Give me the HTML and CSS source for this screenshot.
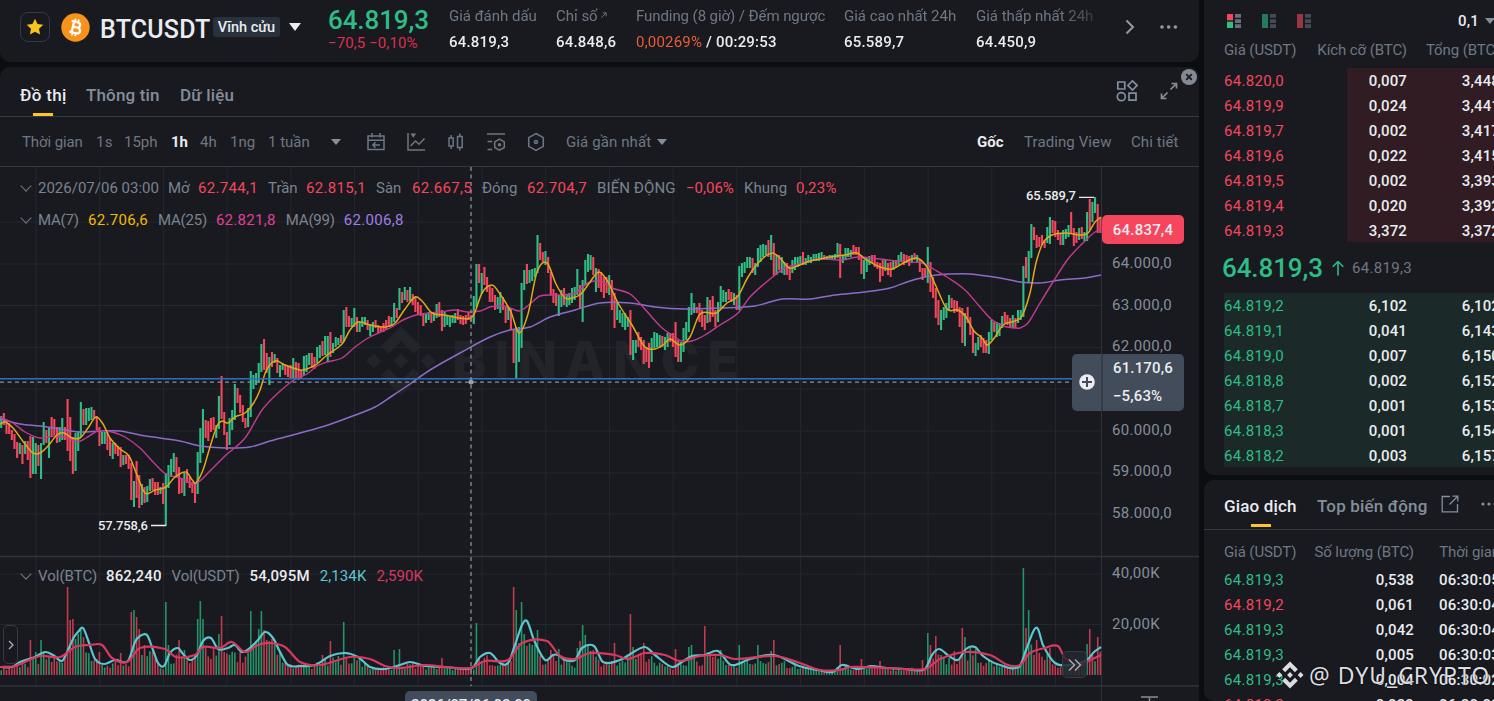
FILE: index.html
```html
<!DOCTYPE html>
<html lang="vi">
<head>
    <meta charset="UTF-8">
    <meta name="viewport" content="width=device-width, initial-scale=1.0">
    <title>BTCUSDT Vĩnh cửu</title>
    <link rel="stylesheet" href="styles.css">
</head>
<body>
    <div class="layout">
        <div class="main-col">
            <!-- Symbol header -->
            <header class="panel ticker">
                <div class="fav">
                    <svg width="18" height="18" viewBox="0 0 18 18"><path d="M9 .8l2.5 5.3 5.8.7-4.3 4 1.1 5.8L9 13.8l-5.100 2.800 1.100-5.800-4.300-4 5.800-.7z" fill="#f8c51c"/></svg>
                </div>
                <svg class="coin" width="29" height="29" viewBox="0 0 29 29">
                    <circle cx="14.500" cy="14.500" r="14.200" fill="#f7931a"/>
                    <g transform="rotate(13 14.500 14.500)" fill="none" stroke="#fff" stroke-width="2.300">
                        <path d="M9.300 9h6.200c4 0 4 5.200 0 5.200h-3.800M9.300 20h7c4.400 0 4.400-5.800 0-5.800M11.800 9v11"/>
                        <path d="M12.700 6v3M16 6v3M12.700 20v3M16 20v3" stroke-width="1.700"/>
                    </g>
                </svg>
                <h1>BTCUSDT</h1>
                <span class="tag">Vĩnh cửu</span>
                <span class="caret caret-white"></span>
                <div class="last">
                    <strong>64.819,3</strong>
                    <span>−70,5 −0,10%</span>
                </div>
                <div class="stats">
                    <div class="stat mark"><label>Giá đánh dấu</label><b>64.819,3</b></div>
                    <div class="stat index"><label>Chỉ số <svg width="6" height="6" viewBox="0 0 7 7"><path d="M.5 6.500L6 1M2 1h4v4" fill="none" stroke="#6f7783" stroke-width="1.100"/></svg></label><b>64.848,6</b></div>
                    <div class="stat funding"><label>Funding (8 giờ) / Đếm ngược</label><b><i>0,00269%</i> / 00:29:53</b></div>
                    <div class="stat high"><label>Giá cao nhất 24h</label><b>65.589,7</b></div>
                    <div class="stat low"><label>Giá thấp nhất 24h</label><b>64.450,9</b></div>
                </div>
                <svg class="next" width="10" height="16" viewBox="0 0 10 16"><path d="M1.500 1.500L8 8l-6.500 6.500" fill="none" stroke="#929aa5" stroke-width="2"/></svg>
                <svg class="more" width="18" height="4" viewBox="0 0 18 4"><g fill="#929aa5"><circle cx="2" cy="2" r="1.800"/><circle cx="8.700" cy="2" r="1.800"/><circle cx="15.400" cy="2" r="1.800"/></g></svg>
            </header>

            <!-- Chart -->
            <section class="panel chart-panel">
                <nav class="tabs">
                    <a class="active tab-chart">Đồ thị</a>
                    <a class="tab-info">Thông tin</a>
                    <a>Dữ liệu</a>
                    <svg class="widgets" width="22" height="22" viewBox="0 0 22 22"><g fill="none" stroke="#848e9c" stroke-width="1.700"><path d="M1.800 2h7v7h-7zM13 13.200h7v7h-7zM16.500.8l4.600 4.600-4.600 4.600-4.600-4.600z"/><circle cx="5.300" cy="16.700" r="4"/></g></svg>
                    <svg class="expand" width="18" height="18" viewBox="0 0 18 18"><path d="M10.500 7.500L16.500 1.500M11.500 1.500h5v5M7.500 10.500l-6 6M1.500 11.500v5h5" fill="none" stroke="#848e9c" stroke-width="1.700"/></svg>
                </nav>
                <svg class="close" width="16" height="16" viewBox="0 0 16 16"><circle cx="8" cy="8" r="8" fill="#848a94"/><path d="M5.200 5.200l5.600 5.600M10.800 5.200l-5.600 5.600" stroke="#181a20" stroke-width="1.800"/></svg>

                <div class="toolbar">
                    <span class="t-time">Thời gian</span>
                    <span class="t-1s">1s</span>
                    <span class="t-15">15ph</span>
                    <span class="t-1h active">1h</span>
                    <span class="t-4h">4h</span>
                    <span class="t-day">1ng</span>
                    <span class="t-week">1 tuần</span>
                    <span class="caret"></span>
                    <svg class="first-icon" width="20" height="20" viewBox="0 0 20 20"><path d="M2 4h16v13.500H2zM2 8.200h16M6 1v4.500M14 1v4.500M14 13H7M9.500 10.300L6.800 13l2.700 2.700"/></svg>
                    <svg width="20" height="20" viewBox="0 0 20 20"><path d="M2 1v17h17M4.500 14l5-5 3.500 3.200L18.500 6.500M5.800 2.200h3L7.300 4.500z"/></svg>
                    <svg width="20" height="20" viewBox="0 0 20 20"><path d="M3 6h4.200v8H3zM5.100 3v3M5.100 14v3M11.500 4.500h4.700v11h-4.700zM13.800 1.500v3M13.800 15.500v3"/></svg>
                    <svg width="20" height="20" viewBox="0 0 20 20"><path d="M1 2h18M1.500 9.500h4.700M1.500 17.500h4.700M13.500 7.200l4.800 2.700v5.600l-4.800 2.700-4.800-2.700V9.900z"/><circle cx="13.500" cy="12.700" r="1"/></svg>
                    <svg width="20" height="20" viewBox="0 0 20 20"><path d="M10 1.500l7.300 4.200v8.600L10 18.500l-7.300-4.200V5.700z"/><circle cx="10" cy="10" r="1.500"/></svg>
                    <span class="t-price">Giá gần nhất</span>
                    <span class="caret"></span>
                    <div class="views">
                        <span class="active">Gốc</span>
                        <span class="v-tv">Trading View</span>
                        <span class="v-detail">Chi tiết</span>
                    </div>
                </div>

                <div class="plot">
                    <svg id="chart" width="1199" height="534" viewBox="0 167 1199 534"></svg>

                    <div class="legend legend-ohlc">
                        <i class="chev"></i>
                        <span class="l-date">2026/07/06 03:00</span>
                        <span class="l-open">Mở</span><em>62.744,1</em>
                        <span class="l-high">Trần</span><em>62.815,1</em>
                        <span class="l-low">Sàn</span><em>62.667,5</em>
                        <span class="l-close">Đóng</span><em>62.704,7</em>
                        <span class="l-change">BIẾN ĐỘNG</span><em>−0,06%</em>
                        <span class="l-range">Khung</span><em>0,23%</em>
                    </div>
                    <div class="legend legend-ma">
                        <i class="chev"></i>
                        <span class="l-ma7">MA(7)</span><em class="yellow">62.706,6</em>
                        <span class="l-ma">MA(25)</span><em class="pink">62.821,8</em>
                        <span class="l-ma">MA(99)</span><em class="purple">62.006,8</em>
                    </div>
                    <div class="legend legend-vol">
                        <i class="chev"></i>
                        <span class="l-vol">Vol(BTC)</span><em class="white">862,240</em>
                        <span class="l-volu">Vol(USDT)</span><em class="white">54,095M</em>
                        <em class="cyan">2,134K</em>
                        <em class="magenta">2,590K</em>
                    </div>

                    <div class="price-tag">64.837,4</div>
                    <div class="cross-tag">
                        <div class="plus"><svg width="16" height="16" viewBox="0 0 16 16"><circle cx="8" cy="8" r="7.800" fill="#eaecef"/><path d="M8 3v10M3 8h10" stroke="#434c5a" stroke-width="2"/></svg></div>
                        <div class="cross-val"><span>61.170,6</span><span>−5,63%</span></div>
                    </div>
                    <div class="date-tag">2026/07/06 03:00</div>
                    <div class="drawer"><svg width="6" height="10" viewBox="0 0 6 10"><path d="M1 1l4 4-4 4" fill="none" stroke="#aab0b8" stroke-width="1.300"/></svg></div>
                    <div class="jump"><svg width="14" height="12" viewBox="0 0 14 12"><path d="M1 .5L6.500 6 1 11.500M7 .5L12.500 6 7 11.500" fill="none" stroke="#aab0b8" stroke-width="1.300"/></svg></div>
                </div>
            </section>
        </div>

        <div class="side-col">
            <!-- Order book -->
            <section class="panel book">
                <div class="book-top">
                    <svg width="14" height="14" viewBox="0 0 14 14"><path d="M0 0h6v6.300H0z" fill="#f6465d"/><path d="M0 7.700h6V14H0z" fill="#2ebd85"/><path d="M8 0h6v3.700H8zM8 5.200h6v3.700H8zM8 10.300h6V14H8z" fill="#68707c"/></svg>
                    <svg width="14" height="14" viewBox="0 0 14 14"><path d="M0 0h6v14H0z" fill="#247a5b"/><path d="M8 0h6v3.700H8zM8 5.200h6v3.700H8zM8 10.300h6V14H8z" fill="#454b55"/></svg>
                    <svg width="14" height="14" viewBox="0 0 14 14"><path d="M0 0h6v14H0z" fill="#9b3445"/><path d="M8 0h6v3.700H8zM8 5.200h6v3.700H8zM8 10.300h6V14H8z" fill="#454b55"/></svg>
                    <b>0,1</b><span class="caret"></span>
                </div>
                <div class="row head"><span>Giá (USDT)</span><span>Kích cỡ (BTC)</span><span>Tổng (BTC)</span></div>
                <div class="rows asks" id="asks"></div>
                <div class="mid"><strong>64.819,3</strong><svg width="12" height="16" viewBox="0 0 12 16"><path d="M6 15.500V1.500M.7 6.700L6 1.500l5.300 5.200" fill="none" stroke="#2ebd85" stroke-width="1.600"/></svg><span>64.819,3</span></div>
                <div class="rows bids" id="bids"></div>
            </section>

            <!-- Trades -->
            <section class="panel trades">
                <nav class="tabs">
                    <a class="active tab-trades">Giao dịch</a>
                    <a class="tab-top">Top biến động</a>
                    <svg class="popout" width="18" height="18" viewBox="0 0 18 18"><path d="M9 1.500H1.200v15.300h15.300V9M8.500 9.500l8-8M11.500 1.200h5.300v5.300" fill="none" stroke="#848e9c" stroke-width="1.300"/></svg>
                    <svg class="dots" width="18" height="4" viewBox="0 0 18 4"><g fill="#848e9c"><circle cx="2" cy="2" r="1.600"/><circle cx="8" cy="2" r="1.600"/><circle cx="14" cy="2" r="1.600"/></g></svg>
                </nav>
                <div class="row head"><span>Giá (USDT)</span><span>Số lượng (BTC)</span><span>Thời gian</span></div>
                <div id="trades"></div>
            </section>
        </div>
    </div>

    <div class="signature">
        <svg width="28" height="28" viewBox="0 0 28 28"><path d="M14 .5l7.800 7.800-2.900 2.900L14 6.300l-4.900 4.900-2.900-2.900zM3.400 11.100L6.300 14l-2.900 2.900L.5 14zM24.600 11.100l2.900 2.900-2.900 2.900-2.900-2.900zM14 11.100l2.900 2.900-2.900 2.900-2.900-2.900zM14 27.500l-7.800-7.800 2.900-2.900 4.900 4.900 4.900-4.900 2.900 2.900z" fill="#dcdde0"/></svg>
        <span>@ DYU_CRYPTO</span>
    </div>

    <script src="chart.js"></script>
</body>
</html>
```
FILE: styles.css
```css
* {
    box-sizing: border-box;
}

body {
    margin: 0;
    height: 701px;
    overflow: hidden;
    position: relative;
    background: #0b0e11;
    color: #eaecef;
    font-family: Roboto, "Noto Sans", sans-serif;
    font-size: 15px;
    letter-spacing: 0.3px;
}

.layout {
    display: flex;
    gap: 5px;
    width: 1525px;
    height: 701px;
    overflow: hidden;
}

.main-col {
    width: 1199px;
    display: flex;
    flex-direction: column;
    gap: 5px;
}

.side-col {
    width: 321px;
    display: flex;
    flex-direction: column;
    gap: 5px;
}

.panel {
    background: #181a20;
    border-radius: 10px;
}

.caret {
    border: 5px solid transparent;
    border-top: 6px solid #848e9c;
    border-bottom: 0;
}

.caret-white {
    border-width: 6px;
    border-top: 8px solid #eaecef;
    border-bottom: 0;
}

/* header */
.ticker {
    height: 62px;
    display: flex;
    align-items: center;
    padding: 0 21px 8px 20px;
    border-top-left-radius: 0;
    border-top-right-radius: 0;
    white-space: nowrap;
}

.fav {
    width: 30px;
    height: 30px;
    border: 1px solid #333b47;
    border-radius: 8px;
    display: flex;
    align-items: center;
    justify-content: center;
}

.coin {
    margin-left: 11px;
}

h1 {
    width: 110px;
    margin: 4px 0 0 10px;
    font-size: 25px;
    font-weight: 500;
    letter-spacing: 0.2px;
}

.tag {
    width: 67px;
    height: 20px;
    margin-left: 3px;
    background: #29313d;
    border-radius: 3px;
    font-weight: 500;
    font-size: 14.5px;
    line-height: 21px;
    letter-spacing: 0;
    text-align: center;
}

.ticker .caret {
    margin-left: 9px;
}

.last {
    width: 100px;
    margin: 6px 0 0 27px;
    display: flex;
    flex-direction: column;
    color: #d9304e;
}

.last strong,
.mid strong {
    color: #2ebd85;
    font-size: 26px;
    font-weight: 500;
    line-height: 26px;
    letter-spacing: -0.1px;
}

.last span {
    line-height: 21px;
    letter-spacing: 0.1px;
}

.stats {
    width: 645px;
    margin-left: 21px;
    display: flex;
    overflow: hidden;
    -webkit-mask-image: linear-gradient(to right, #000 610px, transparent 665px);
    mask-image: linear-gradient(to right, #000 610px, transparent 665px);
}

.stat {
    flex: none;
    display: flex;
    flex-direction: column;
    gap: 6px;
    margin-top: 4px;
}

.stat label {
    color: #6f7783;
    line-height: 20px;
    letter-spacing: -0.02px;
}

.stat svg {
    vertical-align: 3px;
}

.stat b {
    font-weight: 500;
    line-height: 20px;
    letter-spacing: 0.2px;
}

.stat i {
    font-style: normal;
    font-weight: 400;
    color: #ec5b36;
}

.mark { width: 107px; }
.index { width: 80px; }
.funding { width: 208px; }
.high { width: 132px; }

.funding label {
    letter-spacing: -0.08px;
}

.next {
    margin-left: 31px;
}

.more {
    margin-left: auto;
}

/* chart panel */
.chart-panel {
    position: relative;
    flex: 1;
    border-bottom-left-radius: 0;
    border-bottom-right-radius: 0;
}

.tabs {
    height: 50px;
    display: flex;
    align-items: center;
    padding: 7px 20px 0;
    border-bottom: 1px solid #333b47;
    font-size: 17px;
    font-weight: 500;
    color: #848e9c;
}

.tabs a {
    height: 42px;
    line-height: 42px;
    letter-spacing: 0.15px;
    white-space: nowrap;
}

.tabs .active {
    position: relative;
    color: #eaecef;
}

.tabs .active::after {
    content: "";
    position: absolute;
    left: 50%;
    bottom: 0;
    width: 20px;
    height: 3px;
    margin-left: -10px;
    background: #fcc529;
}

.tab-chart { width: 46px; }
.tabs .tab-chart { letter-spacing: 0.35px; }
.chart-panel .tab-info { width: 94px; }
.chart-panel .tab-chart { margin-right: 20px; }

.widgets {
    margin: 0 22px 8px auto;
}

.expand {
    margin: 0 1px 8px 0;
}

.close {
    position: absolute;
    right: 2px;
    top: 2px;
}

.toolbar {
    height: 50px;
    display: flex;
    align-items: center;
    padding: 0 20px 0 22px;
    border-bottom: 1px solid #333b47;
    color: #6f7783;
    white-space: nowrap;
}

.toolbar .active {
    color: #eaecef;
    font-weight: 700;
}

.toolbar svg {
    margin-right: 20px;
    fill: none;
    stroke: #6f7783;
    stroke-width: 1.5;
}

.t-time { width: 74px; letter-spacing: -0.1px; }
.t-1s { width: 28px; }
.t-15 { width: 47px; letter-spacing: 0; }
.t-1h { width: 29px; letter-spacing: -0.2px; }
.t-4h { width: 30px; letter-spacing: 0; }
.t-day { width: 38px; letter-spacing: 0; }
.t-week { width: 63px; letter-spacing: 0; }
.toolbar .first-icon { margin-left: 25px; }
.t-price { width: 91px; letter-spacing: 0.1px; }

.views {
    margin-left: auto;
    display: flex;
}

.views span { width: 47px; letter-spacing: 0; }
.views .v-tv { width: 107px; letter-spacing: 0.1px; }
.views .v-detail { width: 48px; letter-spacing: 0.1px; }

.plot {
    position: relative;
    height: 534px;
}

.plot svg {
    display: block;
}

#chart text {
    font-size: 15px;
    letter-spacing: 0.3px;
}

#chart .axis {
    fill: #848e9c;
}

#chart .extreme {
    fill: #eaecef;
    font-size: 13px;
    font-weight: 500;
    letter-spacing: 0;
}

#chart .brand {
    fill: #222429;
    font-family: Inter, sans-serif;
    font-size: 52px;
    font-weight: 800;
    letter-spacing: 1px;
}

/* legends lie over the chart */
.legend {
    position: absolute;
    left: 20px;
    display: flex;
    align-items: center;
    height: 20px;
    color: #7b8390;
    white-space: nowrap;
}

.legend-ohlc { top: 11px; }
.legend-ma { top: 43px; }
.legend-vol { top: 399px; }

.legend em {
    font-style: normal;
    color: #f6465d;
    margin-right: 10px;
}

.chev {
    width: 8px;
    height: 8px;
    margin: -5px 8px 0 2px;
    border: solid #6f7783;
    border-width: 0 1.5px 1.5px 0;
    transform: rotate(45deg);
}

.legend-ohlc em { width: 60px; }
.l-date { width: 130px; letter-spacing: 0; }
.l-open { width: 30px; letter-spacing: 0; }
.l-high { width: 38px; letter-spacing: 0; }
.l-low { width: 36px; letter-spacing: 0; }
.l-close { width: 45px; letter-spacing: 0; }
.l-change { width: 89px; letter-spacing: 0.1px; }
.legend-ohlc .l-change + em { width: 48px; letter-spacing: 0; }
.l-range { width: 52px; letter-spacing: 0.1px; }
.l-ma7 { width: 50px; letter-spacing: -0.2px; }
.l-ma { width: 58px; letter-spacing: -0.2px; }
.l-vol { width: 68px; letter-spacing: 0; }
.l-volu { width: 78px; letter-spacing: -0.1px; }

.legend .yellow { color: #f0b90b; }
.legend .pink { color: #e0409a; }
.legend .purple { color: #a27de5; }
.legend .cyan { color: #5cc6d0; letter-spacing: 0.1px; }
.legend .magenta { color: #d9385f; letter-spacing: 0.1px; }
.legend .white { color: #eaecef; font-weight: 500; letter-spacing: 0.15px; }

.price-tag {
    position: absolute;
    left: 1102px;
    top: 48px;
    width: 82px;
    height: 29px;
    background: #f6465d;
    border-radius: 5px;
    font-weight: 500;
    line-height: 30px;
    text-align: center;
    letter-spacing: 0.2px;
}

.cross-tag {
    position: absolute;
    left: 1072px;
    top: 187px;
    width: 112px;
    height: 57px;
    display: flex;
    background: #434c5a;
    border-radius: 5px;
    font-weight: 500;
}

.plus {
    width: 31px;
    padding: 0 0 2px 7px;
    display: flex;
    align-items: center;
    border-right: 2px solid #343c48;
}

.cross-val {
    display: flex;
    flex-direction: column;
    padding-left: 10px;
    line-height: 28px;
    letter-spacing: 0.15px;
}

.date-tag {
    position: absolute;
    left: 405px;
    top: 524px;
    width: 132px;
    height: 10px;
    overflow: hidden;
    padding-top: 5px;
    background: #434c5a;
    border-radius: 5px 5px 0 0;
    font-weight: 500;
    text-align: center;
    letter-spacing: -0.1px;
}

.drawer,
.jump {
    position: absolute;
    display: flex;
    align-items: center;
    justify-content: center;
    border: 1px solid #333b47;
    border-radius: 5px;
    background: #181a20;
}

.drawer {
    left: 3px;
    top: 458px;
    width: 15px;
    height: 39px;
}

.jump {
    left: 1062px;
    top: 484px;
    width: 25px;
    height: 27px;
    background: rgba(36, 40, 48, 0.85);
}

/* order book */
.book {
    height: 475px;
    border-top-left-radius: 0;
}

.book-top {
    height: 38px;
    display: flex;
    align-items: center;
    gap: 21px;
    padding: 4px 0 0 23px;
}

.book-top b {
    margin-left: 126px;
    font-weight: 500;
    letter-spacing: 0.2px;
}

.book-top .caret {
    margin-left: -15px;
}

.row {
    height: 25px;
    display: grid;
    grid-template-columns: 63px 120px 93px;
    padding-left: 20px;
    line-height: 25px;
    text-align: right;
    white-space: nowrap;
}

.row span {
    font-weight: 500;
    letter-spacing: 0.15px;
}

.row span:first-child {
    font-weight: 400;
    letter-spacing: 0.3px;
    text-align: left;
}

.head {
    color: #6f7783;
}

.row.head span {
    font-weight: 400;
    letter-spacing: -0.1px;
}

.book .head {
    margin-bottom: 5px;
}

.sell span:first-child { color: #f6465d; }
.buy span:first-child { color: #2ebd85; }

.asks,
.bids {
    height: 174px;
    padding-top: 1px;
    overflow: hidden;
}

.asks {
    background: linear-gradient(#311c24, #311c24) 143px 0 no-repeat;
}

.bids {
    background: linear-gradient(#1b2a29, #1b2a29) 20px 0 no-repeat;
}

.mid {
    height: 51px;
    display: flex;
    align-items: center;
    color: #6f7783;
    padding-left: 18px;
}

.mid strong {
    width: 110px;
}

.mid span {
    margin-left: 8px;
}

/* trades */
.trades {
    flex: 1;
    overflow: hidden;
}

.trades .tabs {
    padding: 3px 0 0 20px;
}

.trades .tabs .active::after {
    bottom: 0;
}

.tab-trades { width: 73px; margin-right: 20px; }
.tab-top { width: 124px; }

.popout {
    margin-top: -4px;
}

.trades .dots {
    margin: -4px 0 0 22px;
}

.trades .head {
    margin: 10px 0 3px;
}

.trades .row {
    grid-template-columns: 63px 127px 86px;
}

#trades .row span:last-child {
    letter-spacing: 0.25px;
}

/* author mark over the page */
.signature {
    position: absolute;
    left: 1276px;
    top: 656px;
    display: flex;
    align-items: center;
    gap: 5px;
    height: 38px;
    color: #dcdde0;
    font-family: "Noto Sans", sans-serif;
    font-size: 23px;
    letter-spacing: 1px;
    white-space: nowrap;
    text-shadow: 0 0 2px #000;
}
```
FILE: chart.js
```javascript
const UP = '#2ebd85';
const DOWN = '#f6465d';
const STEP = 2.655;
const FIRST_X = 1.2;
const VOL_BASE = 675;

// One line per day, each candle is direction + high-low in chart pixels
const days = [
    'g416-428 r413-425 r421-434 r423-434 r430-440 r434-449 r442-458 g443-454 r445-464 g441-454 r441-460 r436-478 g437-474',
    'g443-474 r445-466 g443-479 g422-445 r430-443 g428-458 r417-437 r419-435 r427-443 g427-442 g418-440 r427-440 r399-451 r417-461 r437-474 g433-471 g431-451 g402-437 r409-425 g408-425 g408-421 g407-420 r410-418 r416-430',
    'r427-446 g432-444 g432-444 r432-450 r438-456 g443-459 r443-454 r446-456 r447-467 g455-465 r455-464 r455-469 r463-500 g481-507 r461-498 r475-508 g484-505 r487-503 g486-502 g479-491 r478-490 r482-495 r482-495 g487-494',
    'r483-504 g473-526 g465-488 g459-477 g453-472 r457-477 r467-494 r478-493 g473-496 r469-483 r477-488 r482-493 r483-503 g452-494 g428-463 g409-453 r420-438 r421-441 r418-432 r417-430 g425-438 g396-429 r376-419 r412-435',
    'r432-450 g418-445 g410-430 g384-420 r388-403 r395-413 r405-422 r418-428 g408-427 g371-417 g375-389 g373-385 g363-383 g344-372 r339-370 r353-373 g357-385 r352-367 g354-363 r358-373 g365-377 g363-370 r365-375 r366-377',
    'r365-379 g358-378 r362-379 r363-380 r370-378 g356-375 g355-372 g353-365 r353-368 r357-369 g347-363 g345-358 r341-356 g336-355 g336-362 r332-357 g343-353 g337-347 g338-345 r335-343 g310-342 r307-327 r316-327 g318-327',
    'g308-327 r317-332 g322-332 g317-327 g317-325 r320-330 g324-336 g322-332 r320-328 r325-333 r327-332 r323-332 r320-330 r316-327 g317-326 g303-322 r308-318 g288-310 r292-303 g287-300 r290-302 g287-301 r294-305 r297-312',
    'r302-315 r305-316 r313-326 g314-323 g312-320 r313-323 g313-321 g304-318 r302-317 r310-331 g312-327 g316-325 g317-327 g315-323 g313-323 r309-320 r315-324 r316-325 r315-324 r312-320 r315-322 g296-324 g264-307 r264-283',
    'g273-294 r267-285 r277-292 r285-302 r288-302 r295-310 g297-309 g292-313 r297-310 r307-323 g307-320 r308-330 r330-363 g327-378 g327-362 g283-348 g270-290 r264-284 g270-283 g269-281 g268-277 g235-273 r243-260 r252-262',
    'g251-265 r257-273 r272-295 r289-303 r293-306 g295-316 g290-307 r288-305 g295-307 g293-305 g288-303 g287-300 g269-295 r285-308 g280-322 g260-285 g254-272 g255-270 r257-275 g268-292 r269-288 r272-292 r277-298 r277-293',
    'g275-295 r280-310 r293-328 g303-320 g310-323 g313-327 g313-330 g317-327 r310-355 g340-360 g340-353 r332-347 r337-350 r340-364 r347-362 r343-368 g338-362 g332-348 g333-347 g335-348 r336-347 g337-350 g333-347 r333-342',
    'r333-347 r322-357 r340-362 g342-362 g328-352 g322-340 g307-332 g293-315 g303-313 r307-313 r303-322 r310-327 r315-330 g297-323 r300-322 r296-317 r310-327 g302-322 g286-308 g290-302 g292-302 r289-300 r292-302 g293-305',
    'r295-310 g266-310 g263-277 g262-273 g257-268 g257-268 r258-273 g263-275 g248-267 g245-262 g244-257 g245-255 r240-257 g235-260 r243-275 g255-275 r255-270 g257-273 g262-275 r263-275 r267-280 g260-273 g257-270 g257-267',
    'g256-265 r252-265 g258-265 g255-263 g257-263 g254-261 g254-261 g253-261 g252-260 r255-260 g256-260 g255-260 g255-260 g254-259 g243-258 r244-278 g255-263 g248-260 g248-257 g250-257 r245-255 r247-255 r247-260 r255-274',
    'g260-279 g258-272 g256-265 r255-263 r255-267 r262-269 r263-282 r260-276 g260-271 r263-275 r262-277 g260-270 r260-268 g255-265 g252-262 r254-265 r255-263 r256-266 g255-263 r253-260 g255-262 r260-272 r268-280 r268-277',
    'g247-283 r262-292 r277-298 r288-318 r300-325 g310-330 g307-320 g303-318 g295-310 r298-308 r300-313 r301-312 r307-327 r308-343 g313-346 r307-323 r317-335 r330-353 g343-356 g337-350 r335-347 r338-353 r340-353 g332-354',
    'g320-340 r322-332 g322-337 g323-336 g316-328 r312-323 r315-325 r318-327 g315-328 r318-328 g310-323 g310-320 g266-317 r257-278 g251-283 g224-258 r227-240 r235-248 r237-247 r235-245 r240-248 g227-243 g217-244 r220-233',
    'r221-237 r230-240 r233-245 g230-245 g229-239 g225-237 r212-233 r228-246 r232-243 g228-240 r227-239 g232-241 g212-241 r199-230 g202-222 g197-213 r204-233 r217-233'
];

const ma7 = '0,424 5,422 13,428 25,444 33,453 40,453 48,446 57,435 64,433 72,438 80,438 88,428 96,417 103,424 110,438 120,449 129,456 137,475 145,493 155,490 166,487 175,477 186,472 193,481 196,483 203,470 210,447 217,426 222,421 228,423 235,417 245,413 253,404 260,390 266,371 275,361 285,365 300,370 307,369 317,364 327,355 342,344 350,330 358,322 370,325 385,327 395,323 405,309 415,297 422,301 432,313 445,315 460,318 473,316 482,293 492,285 500,294 511,312 519,333 528,314 537,272 547,263 556,284 565,298 572,298 581,294 590,282 599,272 608,282 618,303 632,325 645,347 655,349 663,345 670,339 680,345 690,337 700,314 716,313 727,303 738,296 748,277 760,261 772,253 780,258 789,268 797,266 810,261 830,257 845,255 857,253 865,259 880,267 892,269 905,262 917,258 927,267 935,284 947,309 958,310 966,317 974,331 982,338 987,345 995,337 1003,325 1015,321 1022,316 1030,293 1036,263 1043,243 1052,235 1066,233 1080,235 1088,233 1095,222 1101,217';
const ma25 = '0,417 13,423 25,432 40,438 55,436 68,438 77,442 86,438 98,431 112,432 125,437 140,448 155,464 166,474 180,478 195,484 210,471 225,456 245,438 262,410 278,393 294,380 307,374 317,366 327,362 342,358 355,347 370,337 390,328 405,319 420,314 440,312 455,310 468,312 480,311 490,307 505,306 519,311 530,304 540,296 560,295 575,293 588,283 600,281 612,288 630,294 643,307 660,326 672,335 682,341 692,341 705,335 720,325 738,313 750,297 770,279 785,268 800,264 820,259 843,260 857,257 880,259 905,262 922,263 935,270 950,279 965,290 980,307 991,319 1003,326 1015,328 1020,328 1028,323 1040,303 1053,282 1068,259 1085,241 1095,232 1101,230';
const ma99 = '0,419 20,424 40,426 60,429 80,432 100,431 120,431 140,435 160,438 180,441 200,446 225,448 250,447 270,441 300,433 325,426 350,417 375,407 392,396 410,384 430,370 460,353 490,337 510,330 530,327 550,317 575,310 600,303 630,303 655,307 685,309 720,308 755,306 782,299 810,299 835,295 865,292 890,288 910,281 930,276 950,274 970,274 1000,278 1020,282 1040,283 1060,280 1085,278 1101,275';
const volFast = '0,667 12,667 20,662 35,657 45,652 53,655 62,661 68,650 74,637 78,632 83,628 88,640 95,659 104,664 115,660 128,661 135,642 140,636 147,635 153,650 158,663 164,666 170,653 178,648 183,654 190,660 197,655 203,641 211,638 218,649 228,648 235,645 242,652 250,648 258,640 265,632 273,638 280,652 288,665 300,666 315,665 330,656 345,653 358,657 370,667 385,669 400,665 410,662 425,666 445,667 472,668 480,657 490,653 500,663 508,663 515,645 522,625 527,621 534,640 545,660 553,655 558,655 565,660 575,660 582,648 594,646 603,662 620,660 632,653 645,647 655,655 672,667 682,662 692,656 705,655 718,651 731,665 750,659 774,655 799,666 818,670 833,672 842,665 857,669 871,666 886,668 905,669 925,669 932,655 939,649 949,656 958,660 966,649 975,647 983,656 997,664 1019,667 1026,650 1034,630 1038,629 1043,645 1055,663 1070,665 1087,660 1094,652 1101,647';
const volSlow = '0,667 15,666 40,656 60,657 75,647 90,645 102,645 112,658 127,662 140,648 165,649 176,657 195,655 203,647 220,648 232,642 245,652 258,645 270,643 285,647 300,662 320,665 350,657 370,659 385,666 400,668 425,665 445,667 470,668 485,661 508,660 522,643 547,641 560,656 575,659 590,653 615,655 628,659 645,653 665,655 680,661 700,656 720,655 735,659 775,656 800,663 820,670 840,670 850,667 890,668 925,669 940,659 965,652 990,655 1008,665 1020,665 1030,653 1045,648 1058,646 1065,658 1080,665 1090,660 1101,655';

// Volume peaks: x, direction, top
const peaks = '31r640 36g652 41g640 68r587 70r620 73r619 78g634 81g630 99r652 121r653 131r612 134g610 137r617 139r629 142g655 166g602 169g645 179r640 184g650 197g619 200g601 202g619 218g634 221r616 224r652 250g611 258g629 261g611 264r630 269g641 322r655 330r641 343g622 394g650 399g649 442r658 476g623 513r587 516g610 521g602 523g634 526r646 537g630 550r650 558g649 577g648 580r641 582g625 585g635 589g645 614r643 630r614 633g647 644r643 675r649 689g647 691g645 705r626 707g652 720g650 739g645 757g645 771g651 774r640 839r645 861r659 880r661 922r660 927g633 930r645 935r636 941g655 954r651 962r628 964g637 969g648 1023g568 1025r628 1030g610 1033r655 1036r640 1049g644 1051r648 1086g644 1089r629 1092r655 1097r637';

const vGrid = [];
for (let x = 36; x < 1102; x += STEP * 24) vGrid.push(x);
const hGrid = [222, 264, 305.5, 347.5, 389, 431, 473, 514, 574, 624.5];

function toPoints(str) {
    return str.split(' ').map(p => p.split(',').map(Number));
}

// Smooth curve through the points
function curve(str, color, width) {
    const p = toPoints(str);
    let d = `M${p[0]}`;
    for (let i = 0; i < p.length - 1; i++) {
        const a = p[i - 1] || p[i], b = p[i], c = p[i + 1], e = p[i + 2] || c;
        const k = (c[0] - b[0]) / 3;
        const s1 = c[0] === a[0] ? 0 : (c[1] - a[1]) / (c[0] - a[0]);
        const s2 = e[0] === b[0] ? 0 : (e[1] - b[1]) / (e[0] - b[0]);
        d += `C${b[0] + k},${b[1] + s1 * k} ${c[0] - k},${c[1] - s2 * k} ${c}`;
    }
    return `<path d="${d}" fill="none" stroke="${color}" stroke-width="${width}"/>`;
}

function valueAt(points, x) {
    for (let i = 1; i < points.length; i++) {
        if (points[i][0] >= x) {
            const [x0, y0] = points[i - 1];
            const [x1, y1] = points[i];
            return y0 + (y1 - y0) * (x - x0) / (x1 - x0);
        }
    }
    return points[points.length - 1][1];
}

function drawChart() {
    let out = '';

    // Brand mark behind the candles
    out += '<g fill="#222429" transform="translate(365 325) scale(2.57)"><path d="M14 .5l7.800 7.800-2.900 2.900L14 6.300l-4.900 4.900-2.900-2.900zM3.400 11.100L6.300 14l-2.900 2.900L.5 14zM24.600 11.100l2.900 2.900-2.900 2.900-2.900-2.900zM14 11.100l2.900 2.900-2.900 2.900-2.900-2.900zM14 27.500l-7.800-7.800 2.900-2.900 4.900 4.900 4.900-4.900 2.900 2.900z"/></g>';
    out += '<text class="brand" x="452" y="379" textLength="288">BINANCE</text>';

    vGrid.forEach(x => { out += `<path d="M${x} 167V686" stroke="#24272c"/>`; });
    hGrid.forEach(y => { out += `<path d="M0 ${y}H1102" stroke="#24272c"/>`; });
    out += '<path d="M0 556.500H1199M0 686H1199" stroke="#2c343f" stroke-width="1.500"/>';
    out += '<path d="M1101.500 167V701" stroke="#2c343f"/>';

    const candles = days.join(' ').split(' ');
    const fast = toPoints(volFast);
    const top = {};
    peaks.split(' ').forEach(p => {
        const m = p.match(/(\d+)([rg])(\d+)/);
        top[Math.round((m[1] - FIRST_X) / STEP)] = [m[2], +m[3]];
    });

    candles.forEach((c, i) => {
        const x = FIRST_X + i * STEP;
        const [high, low] = c.slice(1).split('-').map(Number);
        const color = c[0] === 'g' ? UP : DOWN;
        out += `<path d="M${x} ${high}V${low}" stroke="${color}" stroke-width="2.100"/>`;

        const wave = Math.abs(Math.sin(i * 12.9898) * 43758.5453) % 1;
        const h = (VOL_BASE - valueAt(fast, x)) * (0.35 + wave * 0.6) + 2;
        const peak = top[i];
        const y = peak ? peak[1] : VOL_BASE - h;
        const volUp = peak ? peak[0] === 'g' : c[0] === 'g';
        out += `<path d="M${x} ${y}V${VOL_BASE}" stroke="${volUp ? '#259367' : '#c13a4e'}" stroke-width="1.600"/>`;
    });

    out += curve(ma99, '#8d6bc9', 1.5);
    out += curve(ma25, '#c23b91', 1.4);
    out += curve(ma7, '#e3a81a', 1.5);
    out += curve(volFast, '#5cc6d0', 2.2);
    out += curve(volSlow, '#d9385f', 2.2);

    // Horizontal line and crosshair
    out += '<path d="M0 378.800H1102" stroke="#2b6fc9" stroke-width="1.600"/>';
    out += '<path d="M0 382.200H1072" stroke="#8b9099" stroke-width="1.300" stroke-dasharray="4 3.500"/>';
    out += '<path d="M471 167V686" stroke="#8b9099" stroke-width="1.300" stroke-dasharray="4 3.500"/>';
    out += '<circle cx="471" cy="382" r="2.500" fill="#9ba0a8"/>';

    // Extremes
    out += '<path d="M151 525.500H166M1079 197.300H1094" stroke="#eaecef" stroke-width="1.300"/>';
    out += '<text class="extreme" x="98" y="529.500" textLength="50">57.758,6</text>';
    out += '<text class="extreme" x="1026" y="200" textLength="50">65.589,7</text>';

    // Axis
    [['64.000,0', 268], ['63.000,0', 310], ['62.000,0', 351], ['60.000,0', 435], ['59.000,0', 476], ['58.000,0', 518]].forEach(([t, y]) => {
        out += `<text class="axis" x="1112" y="${y}">${t}</text>`;
    });
    out += '<text class="axis" x="1112" y="577.500" textLength="48">40,00K</text>';
    out += '<text class="axis" x="1112" y="628.500" textLength="48">20,00K</text>';
    out += '<path d="M1141 697H1158M1149.500 701V698" stroke="#848e9c" stroke-width="1.500"/>';

    document.getElementById('chart').innerHTML = out;
}

const asks = [
    ['64.820,0', '0,007', '3,448'], ['64.819,9', '0,024', '3,441'], ['64.819,7', '0,002', '3,417'],
    ['64.819,6', '0,022', '3,415'], ['64.819,5', '0,002', '3,393'], ['64.819,4', '0,020', '3,392'],
    ['64.819,3', '3,372', '3,372']
];
const bids = [
    ['64.819,2', '6,102', '6,102'], ['64.819,1', '0,041', '6,143'], ['64.819,0', '0,007', '6,150'],
    ['64.818,8', '0,002', '6,152'], ['64.818,7', '0,001', '6,153'], ['64.818,3', '0,001', '6,154'],
    ['64.818,2', '0,003', '6,157']
];
const trades = [
    ['64.819,3', '0,538', '06:30:05', 'buy'], ['64.819,2', '0,061', '06:30:04', 'sell'],
    ['64.819,3', '0,042', '06:30:04', 'buy'], ['64.819,3', '0,005', '06:30:03', 'buy'],
    ['64.819,3', '0,004', '06:30:02', 'buy'], ['64.819,2', '0,039', '06:30:02', 'sell']
];

function fill(id, list, side) {
    document.getElementById(id).innerHTML = list.map(r =>
        `<div class="row ${r[3] || side}"><span>${r[0]}</span><span>${r[1]}</span><span>${r[2]}</span></div>`
    ).join('');
}

fill('asks', asks, 'sell');
fill('bids', bids, 'buy');
fill('trades', trades);
drawChart();
```
